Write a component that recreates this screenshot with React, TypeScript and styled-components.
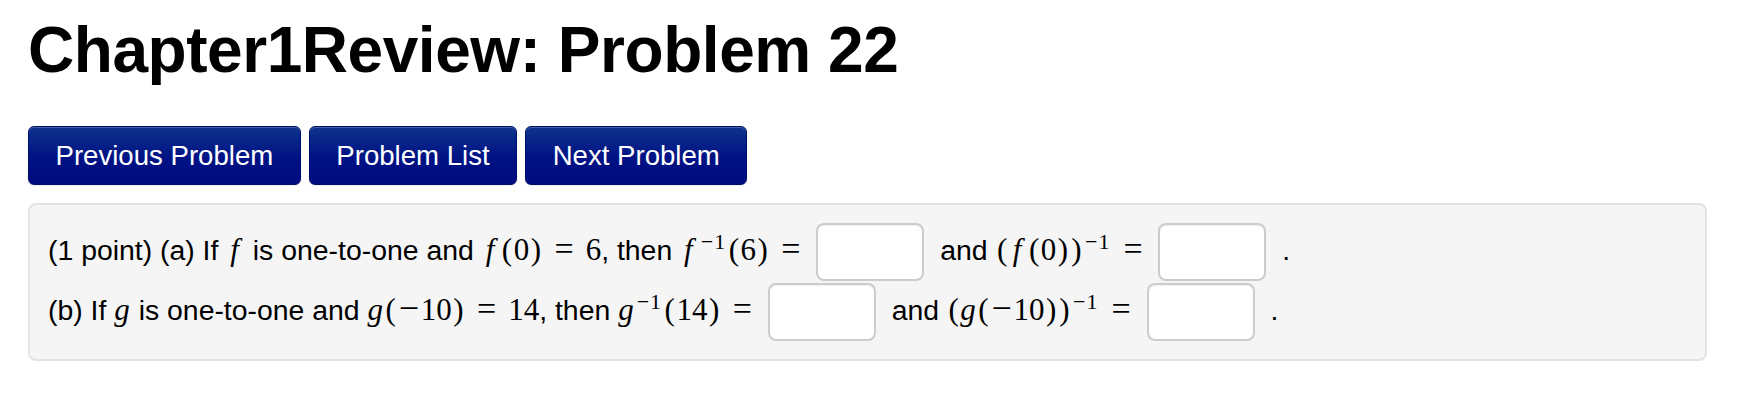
import React from "react";
import styled, { createGlobalStyle } from "styled-components";

const GlobalStyle = createGlobalStyle`
  html, body {
    margin: 0;
    padding: 0;
    background: #ffffff;
    font-family: "Liberation Sans", Arial, Helvetica, sans-serif;
    color: #000000;
  }
`;

const Page = styled.div`
  padding: 15px 53px 0 28px;
`;

const Title = styled.h1`
  margin: 0;
  font-family: "Liberation Sans", Arial, sans-serif;
  font-weight: 700;
  font-size: 64px;
  line-height: 1.1;
  letter-spacing: -0.45px;
`;

const ButtonBar = styled.div`
  display: flex;
  gap: 8px;
  margin-top: 41px;
`;

const NavButton = styled.button`
  height: 59px;
  padding: 0 26.5px;
  font-family: "Liberation Sans", Arial, sans-serif;
  font-size: 27.6px;
  color: #ffffff;
  background: linear-gradient(to bottom, #0d338c 0%, #001284 55%, #000a80 100%);
  border: 1px solid #00106a;
  border-radius: 6px;
  box-shadow: inset 0 1px 0 rgba(255, 255, 255, 0.22), 0 1px 2px rgba(0, 0, 0, 0.08);
  cursor: pointer;
`;

const Panel = styled.div`
  margin-top: 18px;
  background: #f5f5f5;
  border: 2px solid #e3e3e3;
  border-radius: 8px;
  padding: 17px 18px;
`;

const Row = styled.div`
  font-size: 28.4px;
  line-height: 1.2;
  white-space: nowrap;
`;

/* inline math, spaced to approximate TeX metrics */
const M = styled.span`
  font-family: "Liberation Serif", "Times New Roman", serif;
  font-size: 31px;
`;

const V = styled.i<{ $wide?: boolean }>`
  font-style: italic;
  padding-left: ${(p) => (p.$wide ? "4px" : "0")};
  padding-right: ${(p) => (p.$wide ? "6px" : "1px")};
`;

const Paren = styled.span`
  padding: 0 1.5px;
`;

const Minus = styled.span`
  font-size: 36px;
  line-height: 0;
  padding: 0 1.5px;
`;

const Sup = styled.sup`
  font-size: 22px;
  line-height: 0;
  vertical-align: 11px;
  margin-left: 1px;
  margin-right: 2px;
`;

const SupMinus = styled.span`
  padding: 0 1px;
`;

const Rel = styled.span<{ $end?: boolean }>`
  font-size: 34px;
  line-height: 0;
  margin: 0 ${(p) => (p.$end ? "0" : "12px")} 0 12px;
`;

const Answer = styled.input`
  box-sizing: border-box;
  width: 108px;
  height: 58px;
  margin: 1px 8px;
  vertical-align: middle;
  background: #ffffff;
  border: 2px solid #cccccc;
  border-radius: 8px;
  box-shadow: inset 0 1px 1px rgba(0, 0, 0, 0.06);
  font-size: 24px;
  padding: 0 8px;
  outline: none;
`;

const InvSup = () => (
  <Sup>
    <SupMinus>−</SupMinus>1
  </Sup>
);

export default function App() {
  return (
    <>
      <GlobalStyle />
      <Page>
        <Title>Chapter1Review: Problem 22</Title>
        <ButtonBar>
          <NavButton>Previous Problem</NavButton>
          <NavButton>Problem List</NavButton>
          <NavButton>Next Problem</NavButton>
        </ButtonBar>
        <Panel>
          <Row>
            (1 point) (a) If{" "}
            <M>
              <V $wide>f</V>
            </M>{" "}
            is one-to-one and{" "}
            <M>
              <V $wide>f</V>
              <Paren>(</Paren>0<Paren>)</Paren>
              <Rel>=</Rel>6
            </M>
            , then{" "}
            <M>
              <V $wide>f</V>
              <InvSup />
              <Paren>(</Paren>6<Paren>)</Paren>
              <Rel $end>=</Rel>
            </M>{" "}
            <Answer type="text" aria-label="answer 1" /> and{" "}
            <M>
              <Paren>(</Paren>
              <V $wide>f</V>
              <Paren>(</Paren>0<Paren>)</Paren>
              <Paren>)</Paren>
              <InvSup />
              <Rel $end>=</Rel>
            </M>{" "}
            <Answer type="text" aria-label="answer 2" /> .
          </Row>
          <Row>
            (b) If{" "}
            <M>
              <V>g</V>
            </M>{" "}
            is one-to-one and{" "}
            <M>
              <V>g</V>
              <Paren>(</Paren>
              <Minus>−</Minus>10<Paren>)</Paren>
              <Rel>=</Rel>14
            </M>
            , then{" "}
            <M>
              <V>g</V>
              <InvSup />
              <Paren>(</Paren>14<Paren>)</Paren>
              <Rel $end>=</Rel>
            </M>{" "}
            <Answer type="text" aria-label="answer 3" /> and{" "}
            <M>
              <Paren>(</Paren>
              <V>g</V>
              <Paren>(</Paren>
              <Minus>−</Minus>10<Paren>)</Paren>
              <Paren>)</Paren>
              <InvSup />
              <Rel $end>=</Rel>
            </M>{" "}
            <Answer type="text" aria-label="answer 4" /> .
          </Row>
        </Panel>
      </Page>
    </>
  );
}
